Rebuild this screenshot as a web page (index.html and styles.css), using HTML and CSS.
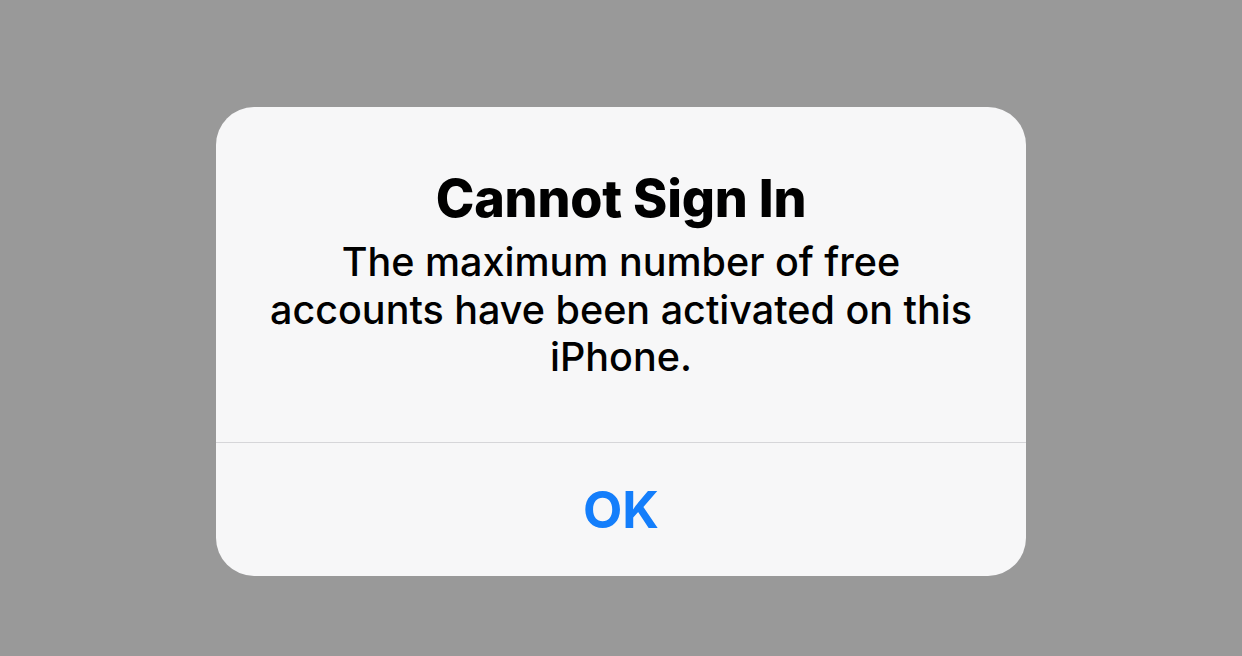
FILE: index.html
```html
<!DOCTYPE html>
<html lang="en">
<head>
    <meta charset="UTF-8">
    <meta name="viewport" content="width=device-width, initial-scale=1.0">
    <title>Cannot Sign In</title>
    <link rel="stylesheet" href="styles.css">
</head>
<body>
    <div class="alert">
        <div class="alert-body">
            <h1 class="alert-title">Cannot Sign In</h1>
            <p class="alert-message">The maximum number of free accounts have been activated on this iPhone.</p>
        </div>
        <button class="alert-button">OK</button>
    </div>
</body>
</html>
```

FILE: styles.css
```css
body {
    font-family: Inter, "Noto Sans", "Liberation Sans", sans-serif;
    background: #999999;
    margin: 0;
    padding: 0;
    width: 1242px;
    height: 656px;
    display: flex;
    align-items: flex-start;
    justify-content: center;
    overflow: hidden;
}
.alert {
    margin-top: 107px;
    width: 810px;
    height: 469px;
    background: #f7f7f8;
    border-radius: 38px;
    display: flex;
    flex-direction: column;
    overflow: hidden;
}
.alert-body {
    height: 335px;
    border-bottom: 1px solid #d6d6d9;
    padding: 0 46px;
    text-align: center;
    color: #000;
}
.alert-title {
    margin: 66px 0 0;
    font-size: 52px;
    font-weight: 800;
    line-height: 52px;
    letter-spacing: -0.2px;
}
.alert-message {
    margin: 14px 0 0;
    font-size: 39.5px;
    font-weight: 500;
    line-height: 47.5px;
}
.alert-button {
    flex: 1;
    border: none;
    background: transparent;
    font-family: inherit;
    font-size: 51px;
    font-weight: 700;
    color: #147efb;
    padding: 0;
}
```
